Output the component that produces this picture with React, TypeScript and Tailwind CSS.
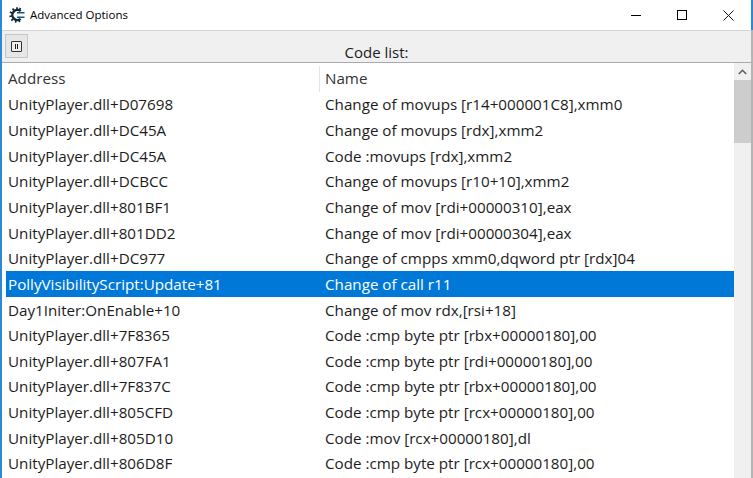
const rows = [
  ["UnityPlayer.dll+D07698", "Change of movups [r14+000001C8],xmm0"],
  ["UnityPlayer.dll+DC45A", "Change of movups [rdx],xmm2"],
  ["UnityPlayer.dll+DC45A", "Code :movups [rdx],xmm2"],
  ["UnityPlayer.dll+DCBCC", "Change of movups [r10+10],xmm2"],
  ["UnityPlayer.dll+801BF1", "Change of mov [rdi+00000310],eax"],
  ["UnityPlayer.dll+801DD2", "Change of mov [rdi+00000304],eax"],
  ["UnityPlayer.dll+DC977", "Change of cmpps xmm0,dqword ptr [rdx]04"],
  ["PollyVisibilityScript:Update+81", "Change of call r11"],
  ["Day1Initer:OnEnable+10", "Change of mov rdx,[rsi+18]"],
  ["UnityPlayer.dll+7F8365", "Code :cmp byte ptr [rbx+00000180],00"],
  ["UnityPlayer.dll+807FA1", "Code :cmp byte ptr [rdi+00000180],00"],
  ["UnityPlayer.dll+7F837C", "Code :cmp byte ptr [rbx+00000180],00"],
  ["UnityPlayer.dll+805CFD", "Code :cmp byte ptr [rcx+00000180],00"],
  ["UnityPlayer.dll+805D10", "Code :mov [rcx+00000180],dl"],
  ["UnityPlayer.dll+806D8F", "Code :cmp byte ptr [rcx+00000180],00"],
];

// gear shaped C logo
function AppIcon() {
  return (
    <svg width="16" height="16" viewBox="0 0 16 16" fill="none">
      <path d="M11.6 4.2A5 5 0 1 0 11.6 11.8" stroke="#10283c" strokeWidth="2.4" />
      <path d="M8 0.3v2.4M3.6 1.6l1.3 1.9M0.8 5l2.2 1M0.4 9.5l2.4-.5M2.2 13.6l2-1.6M6.5 15.7l.5-2.4M10.8 15l-1-2M11.5 1l-1.2 2" stroke="#10283c" strokeWidth="1.7" />
      <path d="M8 5.7h7.5M8 10.3h7.5" stroke="#0e5a82" strokeWidth="1.5" />
    </svg>
  );
}

export default function App() {
  return (
    <div className="w-[753px] h-[478px] overflow-hidden flex bg-white border-l-2 border-[#2a8ad4] font-['Open_Sans','Noto_Sans',sans-serif] text-[#1c1c1c]">
      <div className="flex-1 min-w-0 flex flex-col">
        <div className="h-[30px] shrink-0 flex items-center bg-white">
          <div className="ml-[7px] mr-[5px] flex"><AppIcon /></div>
          <span className="text-[11.5px] text-black">Advanced Options</span>
          <div className="ml-auto flex items-center h-full">
            <div className="w-[46px] flex justify-center"><div className="w-[10px] h-px bg-black" /></div>
            <div className="w-[46px] flex justify-center"><div className="w-[10px] h-[10px] border border-black" /></div>
            <div className="w-[46px] flex justify-center">
              <svg width="11" height="11" viewBox="0 0 11 11" stroke="#111" strokeWidth="1">
                <path d="M0.5 0.5l10 10M10.5 0.5l-10 10" />
              </svg>
            </div>
          </div>
        </div>
        <div className="h-[33px] shrink-0 relative bg-[#f0f0f0] border-t border-[#d4d4d4] border-b border-b-[#a9a9b4]">
          <div className="absolute left-[3px] top-[3px] w-[23px] h-[24px] border border-[#c6c6c6] bg-[#e6e6e6] flex items-center justify-center">
            <div className="w-[11px] h-[11px] border border-[#333] rounded-[1px] flex items-center justify-center gap-px bg-[#eee]">
              <div className="w-px h-[5px] bg-[#222]" />
              <div className="w-px h-[5px] bg-[#222]" />
            </div>
          </div>
          <div className="absolute left-0 right-0 bottom-0 text-center text-[15px] leading-[20px]">Code list:</div>
        </div>
        <div className="flex-1 flex min-h-0">
          <div className="flex-1 min-w-0 pl-[4px] text-[15.2px]">
            <div className="h-[29px] pt-[2px] flex items-center text-[#333]">
              <div className="w-[314px] h-[26px] pl-[2px] flex items-center border-r border-[#e5e5e5]">Address</div>
              <div className="pl-[5px]">Name</div>
            </div>
            {rows.map((r, i) => (
              <div
                key={i}
                className={`h-[25.65px] flex items-center whitespace-nowrap ${i === 7 ? "bg-[#0078d7] text-white" : ""}`}
              >
                <div className="w-[314px] pl-[2px]">{r[0]}</div>
                <div className="pl-[5px]">{r[1]}</div>
              </div>
            ))}
          </div>
          <div className="w-[17px] shrink-0 bg-[#f0f0f0] flex flex-col">
            <div className="h-[17px] flex items-center justify-center">
              <svg width="9" height="6" viewBox="0 0 9 6" fill="none" stroke="#606060" strokeWidth="1.6">
                <path d="M0.8 5l3.7-3.7L8.2 5" />
              </svg>
            </div>
            <div className="h-[63px] bg-[#cdcdcd]" />
          </div>
        </div>
      </div>
      <div className="w-[2px] shrink-0 flex flex-col">
        <div className="h-[30px] bg-[#2a8ad4]" />
        <div className="flex-1 bg-[#b4b4b4]" />
      </div>
    </div>
  );
}
